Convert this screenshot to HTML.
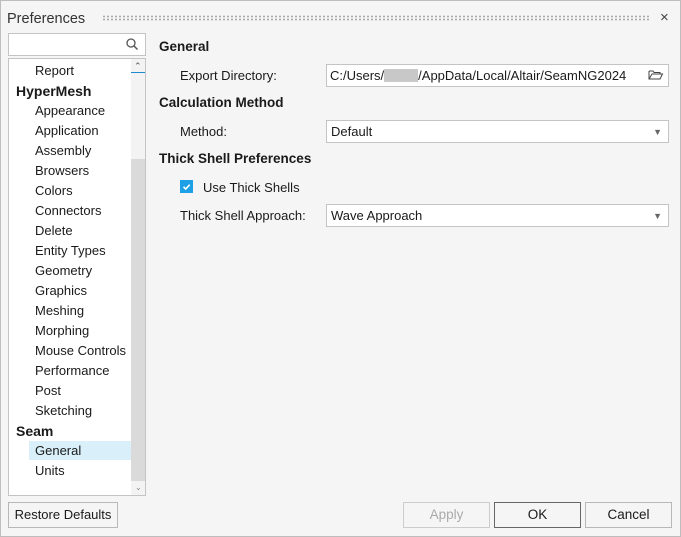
<!DOCTYPE html>
<html><head><style>
*{box-sizing:border-box;margin:0;padding:0}
body{width:681px;height:537px;background:#f5f5f5;font-family:"Liberation Sans",sans-serif;font-size:13px;color:#1a1a1a;position:relative;overflow:hidden}
.a{position:absolute;white-space:nowrap}
.box{position:absolute;background:#fff;border:1px solid #c4c4c4}
.b{font-weight:bold;font-size:13.5px}
.btn{position:absolute;border:1px solid #b8b8b8;background:#f5f5f5;text-align:center;line-height:24px;font-size:13.5px}
.li{position:absolute;left:35px;font-size:13px}
.hd{position:absolute;left:16px;font-weight:bold;font-size:14px}
.chev{position:absolute;right:6px;top:6px;font-size:9px;color:#666}
</style></head><body>
<div class="a" style="left:0;top:0;width:681px;height:537px;border:1px solid #bdbdbd"></div>
<div class="a" style="left:7px;top:11px;font-size:14.5px;color:#333">Preferences</div>
<div class="a" style="left:102px;top:15px;width:548px;height:6px;background-image:radial-gradient(circle,#aaa 0.9px,transparent 1.1px);background-size:4px 3px"></div>
<div class="a" style="left:660px;top:9px;font-size:15px;color:#444">×</div>

<div class="box" style="left:8px;top:33px;width:138px;height:23px"></div>
<svg class="a" style="left:125px;top:37px" width="14" height="14"><circle cx="6" cy="6" r="4" fill="none" stroke="#555" stroke-width="1.3"/><line x1="9" y1="9" x2="12.5" y2="12.5" stroke="#555" stroke-width="1.5"/></svg>

<div class="box" style="left:8px;top:58px;width:138px;height:438px;overflow:hidden">
<div class="a" style="left:122px;top:0;width:14px;height:100px;background:#f3f3f3"></div>
<div class="a" style="left:122px;top:100px;width:14px;height:322px;background:#dadada"></div>
<div class="a" style="left:122px;top:422px;width:14px;height:16px;background:#f3f3f3"></div>
<div class="a" style="left:125px;top:2px;font-size:9px;color:#555">&#8963;</div>
<div class="a" style="left:122px;top:13px;width:14px;height:1px;background:#1e8ad0"></div>
<div class="a" style="left:126px;top:424px;font-size:8px;color:#888">&#8964;</div>
<div class="a" style="left:20px;top:382px;width:102px;height:19px;background:#d9f0fa"></div>
</div>
<div class="li" style="top:63px">Report</div>
<div class="hd" style="top:83px">HyperMesh</div>
<div class="li" style="top:103px">Appearance</div>
<div class="li" style="top:123px">Application</div>
<div class="li" style="top:143px">Assembly</div>
<div class="li" style="top:163px">Browsers</div>
<div class="li" style="top:183px">Colors</div>
<div class="li" style="top:203px">Connectors</div>
<div class="li" style="top:223px">Delete</div>
<div class="li" style="top:243px">Entity Types</div>
<div class="li" style="top:263px">Geometry</div>
<div class="li" style="top:283px">Graphics</div>
<div class="li" style="top:303px">Meshing</div>
<div class="li" style="top:323px">Morphing</div>
<div class="li" style="top:343px">Mouse Controls</div>
<div class="li" style="top:363px">Performance</div>
<div class="li" style="top:383px">Post</div>
<div class="li" style="top:403px">Sketching</div>
<div class="hd" style="top:423px">Seam</div>
<div class="li" style="top:443px">General</div>
<div class="li" style="top:463px">Units</div>

<div class="a b" style="left:159px;top:39px">General</div>
<div class="a" style="left:180px;top:68px">Export Directory:</div>
<div class="box" style="left:326px;top:64px;width:343px;height:23px"></div>
<div class="a" style="left:330px;top:68px">C:/Users/<span style="display:inline-block;width:34px;height:13px;background:#c8c8c8;vertical-align:-2px"></span>/AppData/Local/Altair/SeamNG2024</div>
<svg class="a" style="left:648px;top:69px" width="16" height="12"><path d="M1 2h4l1 1.5h6v2M1 2v8h11l2.5-5H4L1 10" fill="none" stroke="#444" stroke-width="1"/></svg>

<div class="a b" style="left:159px;top:95px">Calculation Method</div>
<div class="a" style="left:180px;top:124px">Method:</div>
<div class="box" style="left:326px;top:120px;width:343px;height:23px"><div class="a" style="left:4px;top:3px">Default</div><div class="chev">&#9660;</div></div>

<div class="a b" style="left:159px;top:151px">Thick Shell Preferences</div>
<div class="a" style="left:180px;top:180px;width:13px;height:13px;background:#1ea0e6"></div>
<svg class="a" style="left:180px;top:180px" width="13" height="13"><path d="M3.5 6.8l2.2 2.2 4-4.3" fill="none" stroke="#fff" stroke-width="1.6"/></svg>
<div class="a" style="left:203px;top:180px">Use Thick Shells</div>
<div class="a" style="left:180px;top:208px">Thick Shell Approach:</div>
<div class="box" style="left:326px;top:204px;width:343px;height:23px"><div class="a" style="left:4px;top:3px">Wave Approach</div><div class="chev">&#9660;</div></div>

<div class="btn" style="left:8px;top:502px;width:110px;height:26px;font-size:13px">Restore Defaults</div>
<div class="btn" style="left:403px;top:502px;width:87px;height:26px;color:#aaa;border-color:#ccc">Apply</div>
<div class="btn" style="left:494px;top:502px;width:87px;height:26px;border-color:#666">OK</div>
<div class="btn" style="left:585px;top:502px;width:87px;height:26px">Cancel</div>
</body></html>
